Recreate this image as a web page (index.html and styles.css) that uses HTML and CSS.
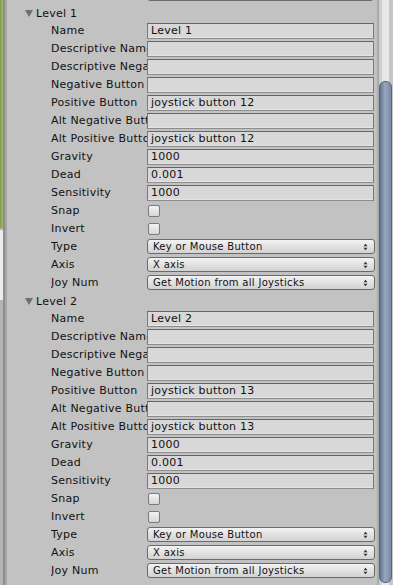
FILE: index.html
```html
<!DOCTYPE html>
<html lang="en">
<head>
    <meta charset="UTF-8">
    <meta name="viewport" content="width=device-width, initial-scale=1.0">
    <title>Input Manager</title>
    <link rel="stylesheet" href="styles.css">
</head>
<body>
    <div class="window">
        <div class="side">
            <div class="side-green"></div>
            <div class="side-box"></div>
        </div>
        <div class="divider"></div>
        <div class="inspector">
            <div class="prev-field"></div>
            <div id="axes"></div>
        </div>
        <div class="scrollbar">
            <div class="thumb"></div>
        </div>
    </div>

    <script>
        const levels = [
            { name: 'Level 1', button: 'joystick button 12' },
            { name: 'Level 2', button: 'joystick button 13' },
            { name: 'Level 3', button: 'joystick button 14' }
        ];

        const arrows = '<svg class="arrows" width="5" height="8" viewBox="0 0 5 8">' +
            '<path d="M0.5 3.2 L2.5 0.8 L4.5 3.2 Z M0.5 4.8 L2.5 7.2 L4.5 4.8 Z" fill="#333"/></svg>';

        function field(value) {
            return `<div class="field">${value}</div>`;
        }

        function popup(value) {
            return `<div class="popup"><span>${value}</span>${arrows}</div>`;
        }

        function row(label, control) {
            return `<div class="row"><div class="label">${label}</div>${control}</div>`;
        }

        function renderAxes() {
            const axes = document.getElementById('axes');
            let html = '';
            levels.forEach((level) => {
                html += `<div class="foldout"><span class="tri"></span>${level.name}</div>`;
                html += row('Name', field(level.name));
                html += row('Descriptive Name', field(''));
                html += row('Descriptive Negative Name', field(''));
                html += row('Negative Button', field(''));
                html += row('Positive Button', field(level.button));
                html += row('Alt Negative Button', field(''));
                html += row('Alt Positive Button', field(level.button));
                html += row('Gravity', field('1000'));
                html += row('Dead', field('0.001'));
                html += row('Sensitivity', field('1000'));
                html += row('Snap', '<div class="check"></div>');
                html += row('Invert', '<div class="check"></div>');
                html += row('Type', popup('Key or Mouse Button'));
                html += row('Axis', popup('X axis'));
                html += row('Joy Num', popup('Get Motion from all Joysticks'));
            });
            axes.innerHTML = html;
        }

        renderAxes();
    </script>
</body>
</html>
```

FILE: styles.css
```css
body {
    margin: 0;
    background-color: #c2c2c2;
    font-family: "DejaVu Sans", sans-serif;
    font-size: 11px;
    letter-spacing: 0.25px;
    color: #111;
}

.window {
    display: flex;
    width: 393px;
    height: 585px;
    overflow: hidden;
}

.side {
    width: 3px;
    background-color: #b4b4b4;
}

.side-green {
    height: 228px;
    background: linear-gradient(to right, #7f9a4a, #a4b870);
}

.side-box {
    height: 70px;
    margin-top: 2px;
    background-color: #ececec;
}

.divider {
    width: 4px;
    background: linear-gradient(to right, #8e8e8e 0, #8e8e8e 2px, #a6a6a6 2px);
}

.inspector {
    width: 370px;
    overflow: hidden;
}

.prev-field {
    height: 14px;
    margin: -15px 3px 3px 140px;
    border: 1px solid #6c6c6c;
    border-radius: 3px;
    background-color: #d4d4d4;
}

.foldout {
    height: 18px;
    display: flex;
    align-items: center;
    padding-left: 18px;
}

.tri {
    width: 0;
    height: 0;
    margin-right: 3px;
    border-left: 4px solid transparent;
    border-right: 4px solid transparent;
    border-top: 7px solid #6e6e6e;
}

.row {
    height: 18px;
    display: flex;
    align-items: flex-start;
    padding-left: 44px;
}

.label {
    width: 96px;
    line-height: 18px;
    white-space: nowrap;
    overflow: hidden;
}

.field {
    width: 222px;
    height: 14px;
    margin-top: 1px;
    padding-left: 3px;
    line-height: 14px;
    background-color: #d8d8d8;
    border: 1px solid #7a7a7a;
    border-top-color: #666;
    border-bottom-color: #8c8c8c;
    box-shadow: inset 0 -1px 0 #e4e4e4;
}

.check {
    width: 10px;
    height: 10px;
    margin: 3px 0 0 1px;
    border: 1px solid #7a7a7a;
    border-radius: 2px;
    background: linear-gradient(#f2f2f2, #d6d6d6);
}

.popup {
    width: 215px;
    height: 13px;
    margin-top: 1px;
    padding: 0 6px 0 5px;
    display: flex;
    align-items: center;
    justify-content: space-between;
    border: 1px solid #6a6a6a;
    border-radius: 3px;
    background: linear-gradient(#f3f3f3, #d2d2d2);
    font-size: 10px;
    letter-spacing: 0.3px;
}

.scrollbar {
    position: relative;
    width: 16px;
    background: linear-gradient(to right, #aaaaaa 0, #aaaaaa 2px, #cdcdcd 2px, #cdcdcd 5px, #e8e8e8 5px, #e8e8e8 12px, #c6c6c6 12px);
}

.thumb {
    position: absolute;
    left: 2px;
    top: 81px;
    width: 11px;
    height: 500px;
    border: 1px solid #56647b;
    border-radius: 6px;
    background: linear-gradient(to right, #62748f, #97a7bf 45%, #7a8ba6);
}
```
